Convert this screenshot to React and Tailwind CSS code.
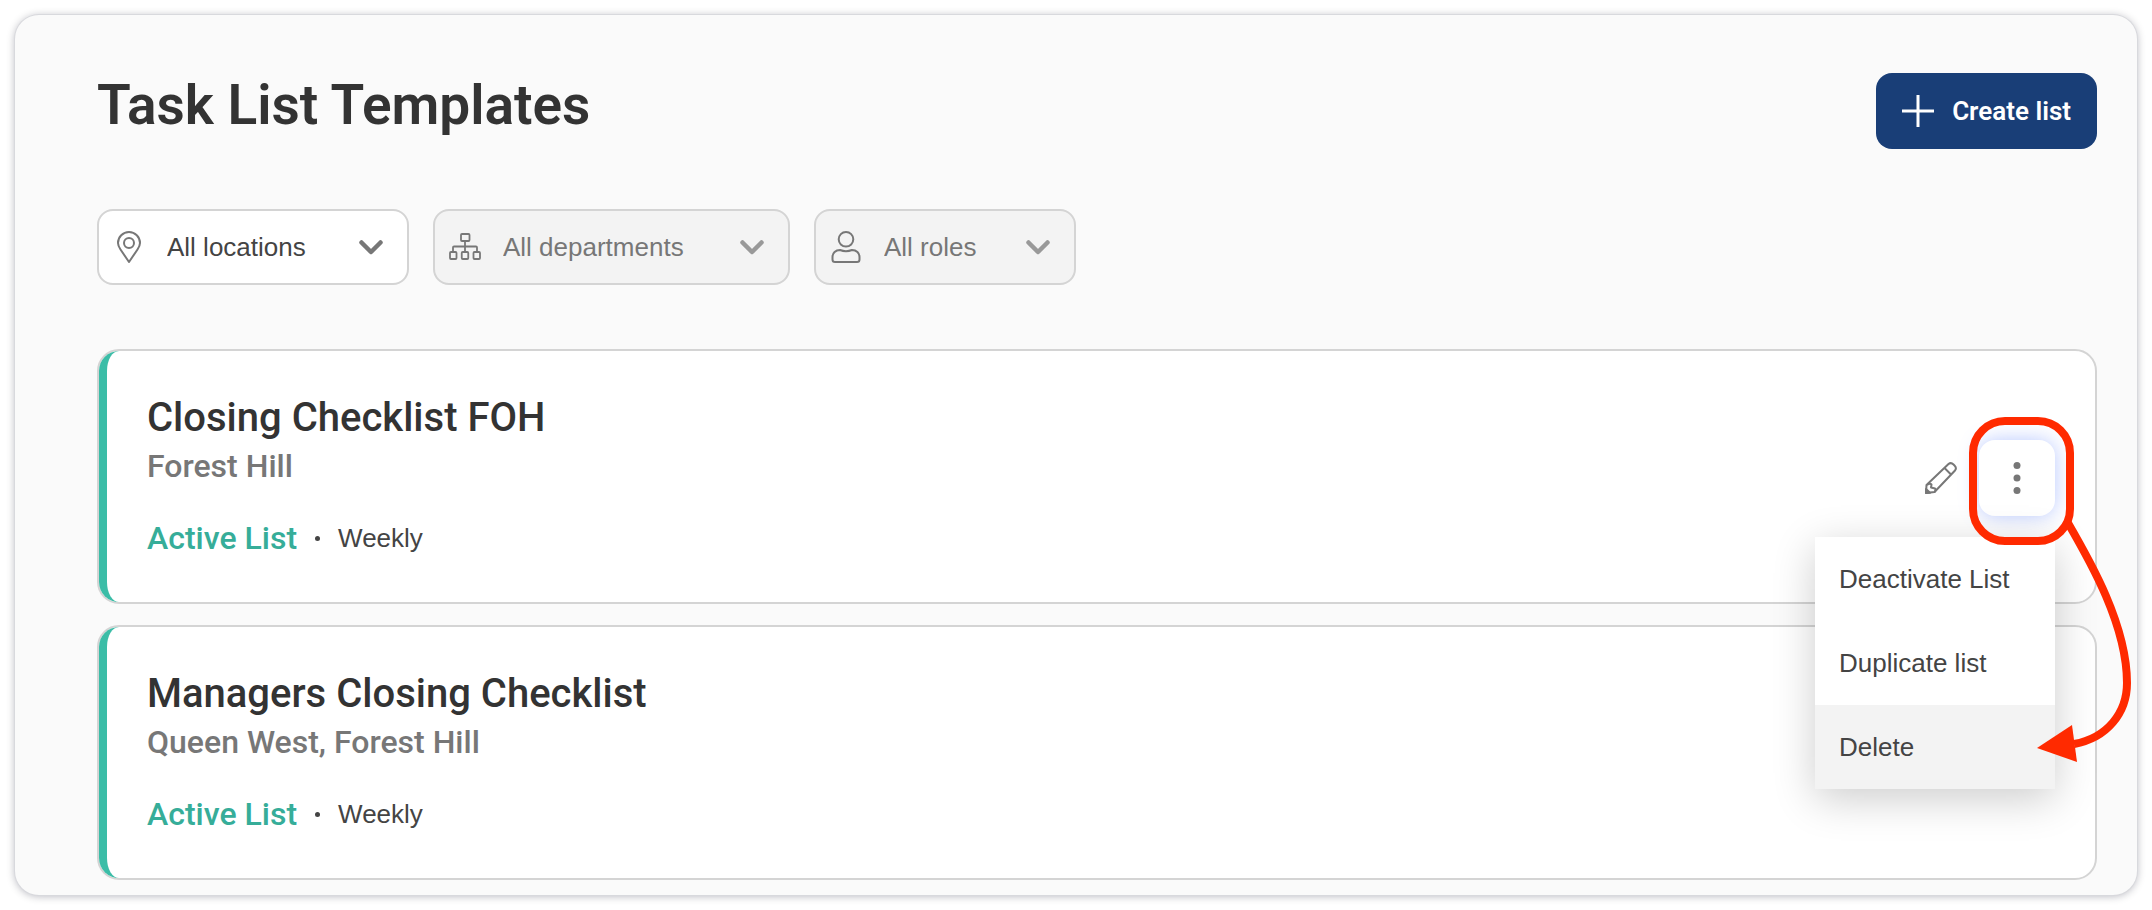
import React from "react";

const PinIcon = () => (
  <svg viewBox="0 0 32 32" className="size-8 shrink-0" fill="none" stroke="#777" strokeWidth="2" aria-hidden="true">
    <path d="M16 31L7.500 18.500C6 16.200 5 14.500 5 12a11 11 0 0 1 22 0c0 2.500-1 4.200-2.500 6.500Z" strokeLinejoin="round" />
    <circle cx="16" cy="12" r="5" />
  </svg>
);

const OrgIcon = () => (
  <svg viewBox="0 0 32 32" className="size-8 shrink-0" fill="none" stroke="#777" strokeWidth="1.800" aria-hidden="true">
    <rect x="12" y="3" width="8.500" height="7" rx="1" />
    <rect x="1" y="21" width="6.500" height="7" rx="1" />
    <rect x="12.750" y="21" width="6.500" height="7" rx="1" />
    <rect x="24.500" y="21" width="6.500" height="7" rx="1" />
    <path d="M16 10v11M4 21v-4.500q0-1 1-1h22q1 0 1 1V21" />
  </svg>
);

const UserIcon = () => (
  <svg viewBox="0 0 32 32" className="size-8 shrink-0" fill="none" stroke="#777" strokeWidth="2" aria-hidden="true">
    <circle cx="16" cy="8.300" r="7.300" />
    <path d="M10 19c-4.500 0-7.500 3-7.500 7v2.500q0 2.500 2.500 2.500h22q2.500 0 2.500-2.500V26c0-4-3-7-7.500-7-2 .8-4 1.200-6 1.200s-4-.4-6-1.200Z" strokeLinejoin="round" />
  </svg>
);

const Chevron = ({ color }) => (
  <svg viewBox="0 0 24 16" className="pointer-events-none h-4 w-6 shrink-0" fill="none" stroke={color} strokeWidth="4.500" strokeLinecap="round" strokeLinejoin="round" aria-hidden="true">
    <path d="M2.500 3.500l9.500 9.500L21.500 3.500" />
  </svg>
);

const PencilIcon = () => (
  <svg viewBox="0 0 32 32" className="size-8" fill="none" stroke="#777" strokeWidth="2" strokeLinejoin="round" aria-hidden="true">
    <path d="M1 31l.5-8L23.500 2q2.500-2 5 .5l1 1q2.500 2.500.5 5L9.500 30Z" />
    <path d="M19.500 6l6.500 6.500M2 23q3-2 4.500-.5l-.5 3 4 1q1.500 1.500-.5 3.500" />
    <path d="M1 31v-4l4 3.700Z" fill="#777" />
  </svg>
);

function Filter({ id, label, icon, width, disabled }) {
  return (
    <div className={`flex h-[76px] items-center rounded-2xl border-2 border-[#d4d4d4] pl-[14px] pr-6 ${width} ${disabled ? "bg-[#f3f3f3]" : "bg-white"}`}>
      <label htmlFor={id} aria-label={label}>{icon}</label>
      <select
        id={id}
        disabled={disabled}
        className={`ml-[22px] min-w-0 flex-1 appearance-none bg-transparent font-['Liberation_Sans',sans-serif] text-[26px] leading-9 outline-none disabled:opacity-100 ${disabled ? "text-[#777]" : "text-[#444]"}`}
      >
        <option>{label}</option>
      </select>
      <Chevron color={disabled ? "#999" : "#777"} />
    </div>
  );
}

function Menu() {
  return (
    <div className="absolute right-0 top-[97px] z-10 flex w-60 flex-col bg-white shadow-[0_10px_40px_rgba(0,0,0,0.2)]">
      {["Deactivate List", "Duplicate list", "Delete"].map((item) => (
        <button key={item} className="h-21 px-6 text-left font-['Liberation_Sans',sans-serif] text-[26px] leading-9 text-[#444] last:bg-[#f3f3f3]">
          {item}
        </button>
      ))}
    </div>
  );
}

const Callout = () => (
  <svg viewBox="0 0 170 360" className="pointer-events-none absolute -left-3 -top-[25px] z-20 h-[360px] w-[170px] max-w-none" fill="none" stroke="#ff2a00" strokeWidth="8" aria-hidden="true">
    <rect x="6" y="6" width="97" height="120" rx="32" />
    <path d="M101 108C123 146 160 210 160 268C160 298 140 323 107 329" />
    <path d="M70 333L105 310L110 347Z" fill="#ff2a00" stroke="none" />
  </svg>
);

function Card({ title, places, open }) {
  return (
    <article className="rounded-[22px] border-2 border-[#d4d4d4] bg-white">
      <div className="flex items-center justify-between rounded-[20px] border-l-8 border-[#3bbda7] px-10 pb-10 pt-[43px]">
        <div>
          <h2 className="text-[40px] font-medium leading-12 text-[#333]">{title}</h2>
          <p className="text-[32px] font-medium leading-12 text-[#777]">{places}</p>
          <p className="mt-6 flex items-center text-[32px] leading-12 text-[#444]">
            <span className="font-medium text-[#36ad99]">Active List</span>
            <span className="mx-[18px] size-[5px] rounded-full bg-[#444]" />
            <span className="font-['Liberation_Sans',sans-serif] text-[26px]">Weekly</span>
          </p>
        </div>
        <div className="flex items-center">
          <button aria-label={`Edit ${title}`} className="flex size-[76px] items-center justify-center">
            <PencilIcon />
          </button>
          <div className="relative">
            <button
              aria-label={`More actions for ${title}`}
              className={`flex size-[76px] items-center justify-center rounded-2xl bg-white ${open ? "shadow-[0_0_20px_rgba(80,120,255,0.4)]" : ""}`}
            >
              <svg viewBox="0 0 8 32" className="h-8 w-2" fill="#777" aria-hidden="true">
                <circle cx="4" cy="3.500" r="3.500" />
                <circle cx="4" cy="16" r="3.500" />
                <circle cx="4" cy="28.500" r="3.500" />
              </svg>
            </button>
            {open && <Menu />}
            {open && <Callout />}
          </div>
        </div>
      </div>
    </article>
  );
}

export default function App() {
  return (
    <div className="bg-white p-[15px] font-['Roboto',sans-serif]">
      <main className="rounded-[24px] bg-[#fafafa] pb-[15px] pl-[82px] pr-10 pt-[58px] shadow-[0_0_0_1px_#d8d9dd,0_1px_8px_rgba(0,0,30,0.3)]">
        <header className="flex items-start justify-between">
          <h1 className="text-[55px] font-semibold leading-[64px] text-[#333]">Task List Templates</h1>
          <button className="flex h-[76px] items-center gap-[18px] rounded-2xl bg-[#193e77] px-[26px] text-[26px] font-semibold leading-9 text-white">
            <svg viewBox="0 0 32 32" className="size-8" stroke="#fff" strokeWidth="3" aria-hidden="true">
              <path d="M16 0v32M0 16h32" />
            </svg>
            Create list
          </button>
        </header>
        <div className="mt-[60px] flex gap-6">
          <Filter id="locations" label="All locations" icon={<PinIcon />} width="w-[312px]" />
          <Filter id="departments" label="All departments" icon={<OrgIcon />} width="w-[357px]" disabled />
          <Filter id="roles" label="All roles" icon={<UserIcon />} width="w-[262px]" disabled />
        </div>
        <section className="mt-16 flex flex-col gap-[21px]">
          <Card title="Closing Checklist FOH" places="Forest Hill" open />
          <Card title="Managers Closing Checklist" places="Queen West, Forest Hill" />
        </section>
      </main>
    </div>
  );
}
